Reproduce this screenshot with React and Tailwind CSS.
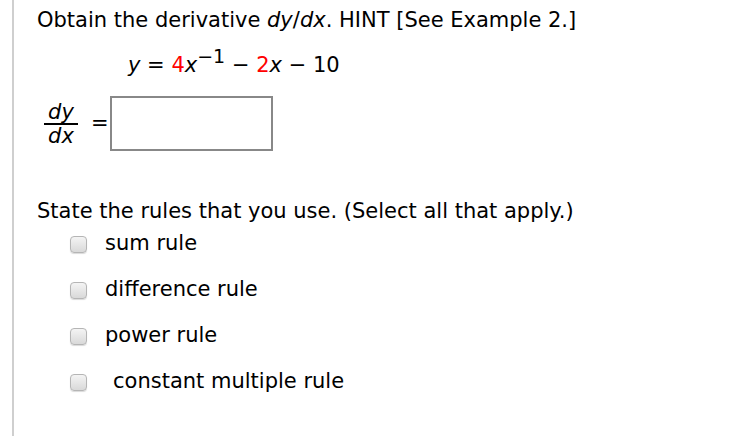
import React from 'react';

const rules = ['sum rule', 'difference rule', 'power rule', 'constant multiple rule'];

const Checkbox = () => (
  <span className="inline-block w-[17px] h-[17px] rounded-[4px] border border-[#b5b5b5] bg-gradient-to-b from-[#f4f4f4] to-[#d9d9d9] shadow-[0_1px_1px_rgba(0,0,0,0.15)] shrink-0" />
);

export default function App() {
  return (
    <div className="w-[752px] h-[436px] bg-white text-black font-['DejaVu_Sans',Verdana,sans-serif] text-[21px] flex">
      <div className="w-[12px] shrink-0" />
      <div className="w-[2px] bg-[#cfcfcf] shrink-0" />
      <div className="flex-1 pl-[23px] pt-[7px]">
        <p className="leading-[26px]">
          Obtain the derivative <i>dy</i>/<i>dx</i>. HINT [See Example 2.]
        </p>

        {/* equation */}
        <p className="mt-[19px] pl-[91px] leading-[26px]">
          <i>y</i> = <span className="text-[#ff0000]">4</span><i>x</i>
          <sup className="text-[19px] top-[-0.5em]">&minus;1</sup> &minus; <span className="text-[#ff0000]">2</span><i>x</i> &minus; 10
        </p>

        {/* answer row */}
        <div className="mt-[18px] flex items-center">
          <div className="flex flex-col items-center w-[34px] ml-[7px]">
            <i className="leading-[22px]">dy</i>
            <div className="w-[34px] h-[2px] bg-black" />
            <i className="leading-[22px]">dx</i>
          </div>
          <span className="ml-[13px] mr-[1px]">=</span>
          <div className="w-[163px] h-[55px] border-2 border-[#888888] bg-white" />
        </div>

        <p className="mt-[47px] leading-[26px]">State the rules that you use. (Select all that apply.)</p>

        <div className="mt-[7px] pl-[33px] flex flex-col gap-[20px]">
          {rules.map((r, i) => (
            <label key={r} className="flex items-center h-[26px]">
              <Checkbox />
              <span className={i === 3 ? 'ml-[26px]' : 'ml-[18px]'}>{r}</span>
            </label>
          ))}
        </div>
      </div>
    </div>
  );
}
